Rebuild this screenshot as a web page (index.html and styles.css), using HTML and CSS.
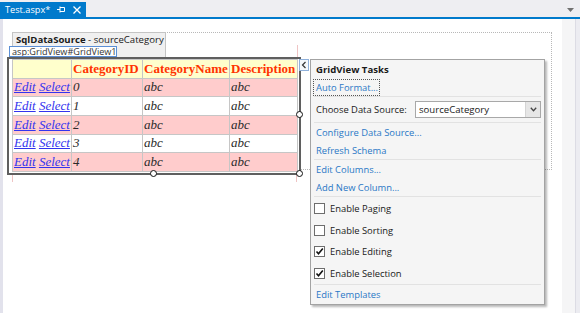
FILE: index.html
```html
<!DOCTYPE html>
<html>
<head>
<meta charset="utf-8">
<link rel="stylesheet" href="styles.css">
</head>
<body>
<div class="app">
  <div class="tabbar">
    <div class="tab">
      <span class="tab-title">Test.aspx*</span>
      <svg class="tab-pin" width="8" height="7" viewBox="0 0 8 7"><path d="M0 3.5H3M3 0.5V6.5M3 1.5H7.5V5.5H3" fill="none" stroke="#fff" stroke-width="1"/></svg>
      <svg class="tab-close" width="8" height="8" viewBox="0 0 8 8"><path d="M0.5 0.5L7.5 7.5M7.5 0.5L0.5 7.5" stroke="#fff" stroke-width="1.3"/></svg>
    </div>
    <svg class="tab-menu" width="7" height="4" viewBox="0 0 7 4"><path d="M0 0H7L3.5 4Z" fill="#717171"/></svg>
  </div>
  <div class="accent"></div>
  <div class="workspace">
    <div class="leftstrip"></div>
    <div class="surface">
      <div class="dotted"></div>
      <div class="sqlbox"><b>SqlDataSource</b> - sourceCategory</div>
      <div class="gvframe">
        <table class="grid">
          <colgroup><col class="c1"><col class="c2"><col class="c3"><col class="c4"></colgroup>
          <tr class="hdr"><th></th><th>CategoryID</th><th>CategoryName</th><th>Description</th></tr>
          <tr class="alt"><td><a>Edit</a> <a>Select</a></td><td>0</td><td>abc</td><td>abc</td></tr>
          <tr><td><a>Edit</a> <a>Select</a></td><td>1</td><td>abc</td><td>abc</td></tr>
          <tr class="alt"><td><a>Edit</a> <a>Select</a></td><td>2</td><td>abc</td><td>abc</td></tr>
          <tr><td><a>Edit</a> <a>Select</a></td><td>3</td><td>abc</td><td>abc</td></tr>
          <tr class="alt"><td><a>Edit</a> <a>Select</a></td><td>4</td><td>abc</td><td>abc</td></tr>
        </table>
      </div>
      <div class="tag">asp:GridView#GridView1</div>
      <div class="handle h-right"></div>
      <div class="handle h-bottom"></div>
      <div class="handle h-corner"></div>
      <div class="guide g1"></div>
      <div class="guide g2"></div>
      <div class="guide g3"></div>
      <div class="chev"><svg width="6" height="8" viewBox="0 0 6 8"><path d="M4.5 1L1.5 4L4.5 7" fill="none" stroke="#333" stroke-width="1.2"/></svg></div>
      <div class="tasks">
        <div class="row title">GridView Tasks</div>
        <div class="row"><span class="link focus">Auto Format...</span></div>
        <div class="sep"></div>
        <div class="row choose">
          <span class="label">Choose Data Source:</span>
          <div class="select"><span class="select-text">sourceCategory</span><span class="select-btn"><svg width="7" height="5" viewBox="0 0 7 5"><path d="M0.8 0.8L3.5 3.8L6.2 0.8" fill="none" stroke="#444" stroke-width="1.3"/></svg></span></div>
        </div>
        <div class="sep"></div>
        <div class="row r18"><span class="link">Configure Data Source...</span></div>
        <div class="row r18"><span class="link">Refresh Schema</span></div>
        <div class="sep"></div>
        <div class="row r19"><span class="link">Edit Columns...</span></div>
        <div class="row r17"><span class="link">Add New Column...</span></div>
        <div class="sep"></div>
        <div class="row check r22"><span class="box"></span><span class="label">Enable Paging</span></div>
        <div class="row check r22"><span class="box"></span><span class="label">Enable Sorting</span></div>
        <div class="row check r21"><span class="box"><svg width="9" height="9" viewBox="0 0 9 9"><path d="M1.5 4.5L3.5 6.8L7.8 1.5" fill="none" stroke="#111" stroke-width="1.6"/></svg></span><span class="label">Enable Editing</span></div>
        <div class="row check r22"><span class="box"><svg width="9" height="9" viewBox="0 0 9 9"><path d="M1.5 4.5L3.5 6.8L7.8 1.5" fill="none" stroke="#111" stroke-width="1.6"/></svg></span><span class="label">Enable Selection</span></div>
        <div class="sep"></div>
        <div class="row r19"><span class="link">Edit Templates</span></div>
      </div>
    </div>
    <div class="scrollbar"></div>
  </div>
</div>
</body>
</html>
```
FILE: styles.css
```css
html, body {
  margin: 0;
  padding: 0;
}
body {
  width: 580px;
  height: 313px;
  overflow: hidden;
  background: #fff;
  font-family: "Open Sans", "Noto Sans", sans-serif;
  color: #1e1e1e;
}
.app {
  display: flex;
  flex-direction: column;
  height: 313px;
}
.tabbar {
  height: 17px;
  background: #eeeef2;
  display: flex;
  align-items: flex-end;
  justify-content: space-between;
  flex-shrink: 0;
}
.tab {
  height: 15px;
  width: 86px;
  box-sizing: border-box;
  background: #007acc;
  color: #fff;
  display: flex;
  align-items: center;
  padding-left: 5px;
  padding-right: 5px;
  font-size: 9.2px;
}
.tab-title {
  flex: 1;
}
.tab-pin {
  margin-right: 8px;
}
.tab-menu {
  align-self: center;
  margin-right: 6px;
  margin-top: 2px;
}
.accent {
  height: 2px;
  background: #007acc;
  flex-shrink: 0;
}
.workspace {
  flex: 1;
  display: flex;
}
.leftstrip {
  width: 3px;
  background: #e2e2ec;
}
.surface {
  flex: 1;
  position: relative;
  padding-top: 13px;
  background: #fff;
}
.scrollbar {
  width: 14px;
  background: #f5f5f6;
  border-right: 4px solid #ececf1;
  box-shadow: inset -1px 0 0 #dcdce4;
}
.dotted {
  position: absolute;
  left: 9px;
  top: 13px;
  width: 540px;
  height: 138px;
  box-sizing: border-box;
  border: 1px dotted #b8b8b8;
}
.sqlbox {
  position: relative;
  z-index: 1;
  margin-left: 9px;
  width: 154px;
  height: 25px;
  box-sizing: border-box;
  background: #f0f0f0;
  border: 1px solid #c4c4c4;
  border-bottom: 0;
  font-size: 9.6px;
  line-height: 12px;
  padding: 1px 0 0 3px;
  white-space: nowrap;
  overflow: hidden;
  color: #1a1a1a;
}
.gvframe {
  position: relative;
  z-index: 2;
  margin-left: 4px;
  width: 294px;
  height: 118px;
  box-sizing: border-box;
  border: 2px solid #5f5f5f;
  padding: 0 0 0 3px;
  background: #fff;
}
.grid {
  border-collapse: collapse;
  table-layout: fixed;
  width: 285px;
  font-family: "Liberation Serif", "Times New Roman", serif;
  font-size: 13px;
}
.c1 { width: 59px; }
.c2 { width: 71px; }
.c3 { width: 87px; }
.c4 { width: 68px; }
.grid tr {
  height: 18.66px;
}
.grid th, .grid td {
  border: 1px solid #c6c6c6;
  padding: 0 0 0 1px;
  text-align: left;
  white-space: nowrap;
  overflow: hidden;
  vertical-align: middle;
}
.grid th {
  color: #ff3300;
  font-weight: bold;
}
.grid td {
  font-style: italic;
  color: #2a2a2a;
}
.hdr {
  background: #ffffcc;
}
.alt {
  background: #ffcccc;
}
.grid a {
  color: #3333ee;
  text-decoration: underline;
}
.tag {
  position: absolute;
  z-index: 3;
  left: 6px;
  top: 27px;
  width: 108px;
  height: 11px;
  box-sizing: border-box;
  border: 1px solid #5b8fd6;
  background: #fff;
  font-size: 9.1px;
  line-height: 9px;
  padding-left: 2px;
  color: #333;
  white-space: nowrap;
  overflow: hidden;
}
.handle {
  position: absolute;
  z-index: 4;
  width: 7px;
  height: 7px;
  box-sizing: border-box;
  border: 1px solid #111;
  border-radius: 50%;
  background: #fff;
}
.h-right { left: 293px; top: 92px; }
.h-bottom { left: 147px; top: 151px; }
.h-corner { left: 293px; top: 151px; }
.guide {
  position: absolute;
  background: #efc4c4;
}
.g1 { left: 9px; top: 155px; width: 1px; height: 8px; }
.g2 { left: 293px; top: 155px; width: 1px; height: 8px; }
.g3 { left: 294px; top: 26px; width: 1px; height: 12px; }
.chev {
  position: absolute;
  z-index: 5;
  left: 296px;
  top: 40px;
  width: 10px;
  height: 12px;
  box-sizing: border-box;
  border: 1px solid #8fb0da;
  background: #f4f7fb;
  display: flex;
  align-items: center;
  justify-content: center;
}
.tasks {
  position: absolute;
  z-index: 6;
  left: 307px;
  top: 40px;
  width: 235px;
  height: 246px;
  box-sizing: border-box;
  border: 1px solid #a3a3a3;
  background: #f5f5f5;
  box-shadow: 2px 2px 2px rgba(0, 0, 0, 0.28);
  display: flex;
  flex-direction: column;
  font-size: 9.4px;
  color: #1a1a1a;
}
.row {
  height: 18px;
  display: flex;
  align-items: center;
  padding-left: 5px;
  flex-shrink: 0;
  white-space: nowrap;
}
.title {
  font-weight: bold;
  font-size: 9.6px;
}
.r17 { height: 17px; }
.r18 { height: 18px; }
.r19 { height: 19px; }
.r21 { height: 21px; }
.r22 { height: 22px; }
.link {
  color: #2a78c6;
}
.focus {
  outline: 1px dotted #555;
  outline-offset: 1px;
  margin-left: -1px;
  padding-left: 1px;
}
.sep {
  height: 1px;
  background: #e2e2e2;
  margin: 0 3px;
  flex-shrink: 0;
}
.choose {
  height: 25px;
}
.choose .label {
  width: 99px;
}
.select {
  width: 126px;
  height: 17px;
  box-sizing: border-box;
  border: 1px solid #a8a8a8;
  background: #fff;
  display: flex;
  align-items: center;
}
.select-text {
  flex: 1;
  padding-left: 3px;
  font-size: 9.6px;
}
.select-btn {
  width: 14px;
  height: 15px;
  background: #e6e6e6;
  border-left: 1px solid #d4d4d4;
  display: flex;
  align-items: center;
  justify-content: center;
}
.check {
  padding-left: 3px;
}
.box {
  width: 11px;
  height: 11px;
  box-sizing: border-box;
  border: 1px solid #6d6d6d;
  background: #fff;
  margin-right: 5px;
  display: flex;
  align-items: center;
  justify-content: center;
}
```
